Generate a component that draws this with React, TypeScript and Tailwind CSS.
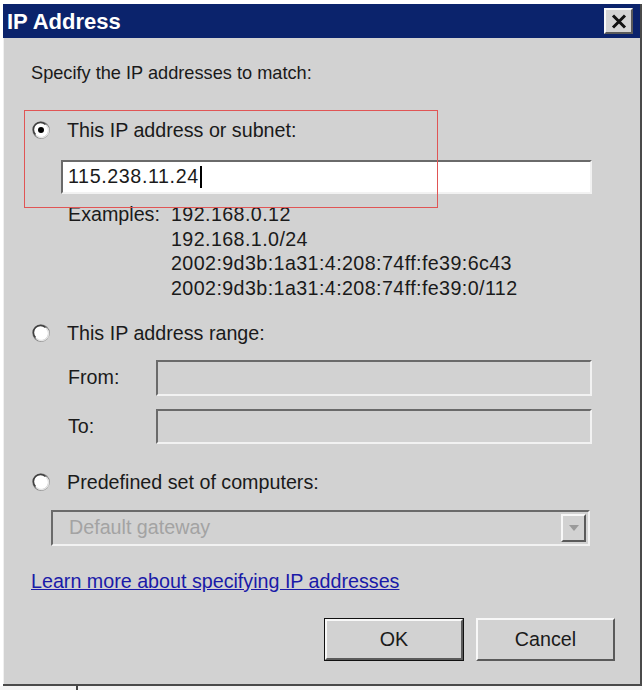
import React from "react";

const font = { fontFamily: '"Liberation Sans", Arial, sans-serif' };

function Radio({ checked = false }: { checked?: boolean }) {
  return (
    <svg width="18" height="18" viewBox="0 0 18 18" className="shrink-0">
      <circle cx="9" cy="9" r="8" fill="#ffffff" stroke="#808080" strokeWidth="1.5" />
      <path d="M3.5 13.5 A7 7 0 0 1 13.5 3.5" fill="none" stroke="#404040" strokeWidth="1.5" />
      <path d="M14.5 4.5 A7 7 0 0 1 4.5 14.5" fill="none" stroke="#e4e4e4" strokeWidth="1.5" />
      {checked && <circle cx="9" cy="9" r="3" fill="#000000" />}
    </svg>
  );
}

const examples = [
  "192.168.0.12",
  "192.168.1.0/24",
  "2002:9d3b:1a31:4:208:74ff:fe39:6c43",
  "2002:9d3b:1a31:4:208:74ff:fe39:0/112",
];

const sunken =
  "border-2 border-t-[#6a6a6a] border-l-[#6a6a6a] border-r-[#f2f2f2] border-b-[#f2f2f2]";
const raised =
  "border-2 border-t-[#f8f8f8] border-l-[#f8f8f8] border-r-[#5a5a5a] border-b-[#5a5a5a]";

export default function App() {
  return (
    <div
      className="relative flex h-[692px] w-[642px] flex-col overflow-hidden bg-white text-[19.7px] text-[#1a1a1a]"
      style={font}
    >
      <div className="ml-[3px] mt-[4px] flex h-[682px] w-[639px] flex-col border-b-2 border-r-2 border-[#4a4a4a]">
        {/* title bar */}
        <div className="flex h-[34px] items-center justify-between bg-[#0b236c] pl-[4px] pr-[7px]">
          <span className="text-[22px] font-bold text-white">IP Address</span>
          <div
            className={`flex h-[26px] w-[29px] items-center justify-center bg-[#d4d4d4] ${raised}`}
          >
            <svg width="16" height="15" viewBox="0 0 16 15">
              <path d="M2 1.5 L14 13.5 M14 1.5 L2 13.5" stroke="#111" strokeWidth="3" />
            </svg>
          </div>
        </div>

        {/* body */}
        <div className="relative flex flex-1 flex-col border-l border-[#f0f0f0] bg-[#d2d2d2] pl-[27px] pr-[48px]">
          <div className="mt-[23px] h-[24px] text-[18.2px] leading-[24px]">
            Specify the IP addresses to match:
          </div>

          <div className="mt-[33px] flex h-[24px] items-center gap-[17px] pl-[1px]">
            <Radio checked />
            <span className="leading-[24px]">This IP address or subnet:</span>
          </div>

          <div
            className={`ml-[30px] mt-[18px] flex h-[34px] items-center bg-white px-[5px] ${sunken}`}
          >
            <span className="tracking-[0.6px]">115.238.11.24</span>
            <span className="ml-[1px] h-[22px] w-[2px] bg-black" />
          </div>

          <div className="ml-[37px] mt-[8px] flex">
            <span className="w-[103px] leading-[24.7px]">Examples:</span>
            <div className="flex flex-col tracking-[0.4px]">
              {examples.map((e) => (
                <span key={e} className="leading-[24.7px]">
                  {e}
                </span>
              ))}
            </div>
          </div>

          <div className="mt-[20px] flex h-[24px] items-center gap-[17px] pl-[1px]">
            <Radio />
            <span className="leading-[24px]">This IP address range:</span>
          </div>

          <div className="mt-[15px] flex items-center">
            <span className="w-[125px] pl-[37px]">From:</span>
            <div className={`h-[36px] flex-1 bg-[#d2d2d2] ${sunken}`} />
          </div>
          <div className="mt-[13px] flex items-center">
            <span className="w-[125px] pl-[37px]">To:</span>
            <div className={`h-[35px] flex-1 bg-[#d2d2d2] ${sunken}`} />
          </div>

          <div className="mt-[26px] flex h-[24px] items-center gap-[17px] pl-[1px]">
            <Radio />
            <span className="leading-[24px]">Predefined set of computers:</span>
          </div>

          <div
            className={`ml-[20px] mr-[2px] mt-[16px] flex h-[36px] items-center justify-between bg-[#d2d2d2] pl-[16px] pr-[2px] ${sunken}`}
          >
            <span className="text-[#a3a3a3]">Default gateway</span>
            <div className={`flex h-[28px] w-[25px] items-center justify-center ${raised}`}>
              <svg width="12" height="8" viewBox="0 0 12 8">
                <path d="M1 1 L11 1 L6 7 Z" fill="#9a9a9a" />
              </svg>
            </div>
          </div>

          <a className="mt-[23px] self-start leading-[24px] text-[#1a1aa8] underline" href="#">
            Learn more about specifying IP addresses
          </a>

          <div className="mt-[25px] flex justify-end gap-[12px]">
            <div className="border border-[#111]">
              <div
                className={`flex h-[41px] w-[138px] items-center justify-center bg-[#d2d2d2] ${raised}`}
              >
                OK
              </div>
            </div>
            <div
              className={`mr-[-23px] flex h-[43px] w-[139px] items-center justify-center bg-[#d2d2d2] ${raised}`}
            >
              Cancel
            </div>
          </div>

          {/* red annotation box */}
          <div className="pointer-events-none absolute left-[20px] top-[72px] h-[98px] w-[414px] border border-[#e05555]" />
        </div>
      </div>

      {/* strip under dialog */}
      <div className="flex h-[4px] bg-[#f4f4f4]">
        <div className="w-[78px] border-r-2 border-[#444]" />
      </div>
    </div>
  );
}
